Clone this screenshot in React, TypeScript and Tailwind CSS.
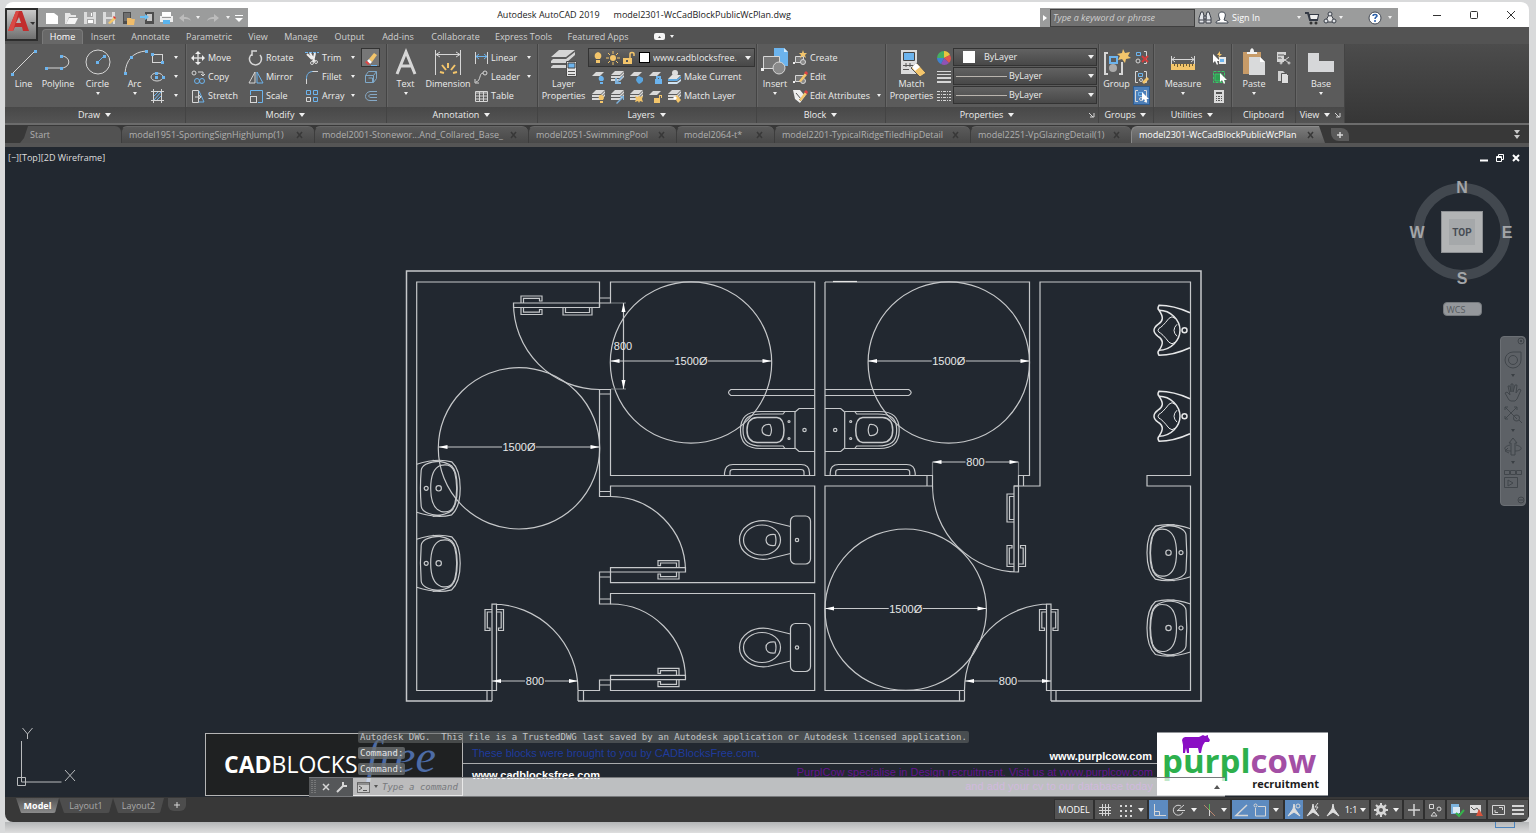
import { ReactNode } from "react";
import clsx from "clsx";

type IconProps = { w?: number; h?: number; children: ReactNode };

const Icon = ({ w = 16, h = 16, children }: IconProps) => (
  <svg
    width={w}
    height={h}
    viewBox={`0 0 ${w} ${h}`}
    fill="none"
    stroke="#d6d6d6"
    className="shrink-0"
    aria-hidden="true"
  >
    {children}
  </svg>
);

const BLUE = "#6cb4ee";
const GOLD = "#f3c56b";

const Caret = ({ big }: { big?: boolean }) => (
  <Icon w={big ? 8 : 6} h={4}>
    <path d={big ? "M1 0h6L4 4z" : "M1 0h4L3 3z"} fill="#f0f0f0" stroke="none" />
  </Icon>
);

/* ---------- quick access ---------- */

const quickIcons = [
  {
    name: "New",
    icon: <path d="M2 3h8l4 3v8H2z" fill="#fff" stroke="none" />,
  },
  {
    name: "Open",
    icon: (
      <g stroke="none">
        <path d="M2 3h5l1 2h5v2H6l-3 7H2z" fill="#e8e8e8" />
        <path d="M6 8h9l-3 6H3z" fill="#f6f6f6" />
      </g>
    ),
  },
  {
    name: "Save",
    icon: (
      <g stroke="none">
        <path d="M2 2h12v12H2z" fill="#dcdcdc" />
        <path d="M5 2h6v5H5zM5 9h7v5H5z" fill="#a5a5a5" />
        <path d="M9 3h1v3H9zM6 10h5v3H6z" fill="#fff" />
      </g>
    ),
  },
  {
    name: "Save As",
    icon: (
      <g stroke="none">
        <path d="M2 2h12v12H2z" fill="#dcdcdc" />
        <path d="M5 2h6v5H5zM5 9h7v5H5z" fill="#a5a5a5" />
        <path d="M7 13l6-6 2 2-6 5z" fill={GOLD} />
        <path d="M12 7l1-1 2 2-1 1z" fill="#d33" />
      </g>
    ),
  },
  {
    name: "Open from Web",
    icon: (
      <g stroke="none">
        <path d="M3 2h8v12H3z" fill="#4d4d4d" />
        <path d="M4 3h6v8H4z" fill="#6f6f6f" />
        <path d="M7 8h4l1 1h3l-1 6H7z" fill="#eebb6a" />
      </g>
    ),
  },
  {
    name: "Save to Web",
    icon: (
      <g stroke="none">
        <path d="M6 2h9v12H6z" fill="#4d4d4d" />
        <path d="M8 4h5v7H8z" fill="#c8c8c8" />
        <path d="M1 6h5V4l4 3-4 3V8H1z" fill="#6cc0f5" />
      </g>
    ),
  },
  {
    name: "Plot",
    icon: (
      <g stroke="none">
        <path d="M4 2h9v4H4z" fill="#fff" />
        <path d="M2 6h13v6H2z" fill="#efefef" />
        <path d="M4 7h9v1H4z" fill="#999" />
        <path d="M5 10h7v4H5z" fill="#5ab4ee" />
      </g>
    ),
  },
];

/* ---------- title bar ---------- */

const TitleBar = () => (
  <header className="flex h-[25px] bg-white items-end">
    <div className="flex h-[19px] w-[243px] items-center bg-[#9b9c9c] pl-[37px]">
      {quickIcons.map((q) => (
        <button key={q.name} aria-label={q.name} className="w-[19px] flex justify-center">
          <Icon>{q.icon}</Icon>
        </button>
      ))}
      <button aria-label="Undo" className="w-[20px] flex justify-center">
        <Icon w={14} h={10}>
          <path d="M1 5l5-4v3c4 0 6 1 7 4-2-2-4-2-7-2v3z" fill="#bcbcbc" stroke="none" />
        </Icon>
      </button>
      <Caret />
      <button aria-label="Redo" className="w-[24px] flex justify-center">
        <Icon w={14} h={10}>
          <path d="M13 5L8 1v3C4 4 2 5 1 8c2-2 4-2 7-2v3z" fill="#bcbcbc" stroke="none" />
        </Icon>
      </button>
      <Caret />
      <button aria-label="Customize" className="pl-1">
        <Icon w={8} h={8}>
          <path d="M0 1.5h8" stroke="#fff" />
          <path d="M0 4h8L4 8z" fill="#fff" stroke="none" />
        </Icon>
      </button>
    </div>
    <h1 className="flex flex-1 self-center justify-center gap-[14px] text-[#222] whitespace-nowrap">
      <span>Autodesk AutoCAD 2019</span>
      <span>model2301-WcCadBlockPublicWcPlan.dwg</span>
    </h1>
    <div className="flex h-[19px] w-[358px] items-center bg-[#9b9c9c] text-white">
      <button aria-label="Collapse search" className="w-[10px] flex justify-center">
        <Icon w={4} h={6}>
          <path d="M0 0l4 3-4 3z" fill="#fff" stroke="none" />
        </Icon>
      </button>
      <input
        aria-label="Search"
        placeholder="Type a keyword or phrase"
        className="h-[18px] w-[145px] border border-[#3f3f3f] bg-[#717171] px-[2px] italic placeholder:text-[#cfcfcf]"
      />
      <button aria-label="Find" className="w-[19px] flex justify-center">
        <Icon>
          <g stroke="#3a3f48" fill="#e4e6ea">
            <path d="M4 2h2l1 4v7H2V8zM10 2h2l2 6v5H9V6z" />
            <path d="M7 6h2v3H7zM2 10h5M9 10h5" />
          </g>
        </Icon>
      </button>
      <button className="flex w-[88px] items-center gap-[2px]">
        <Icon>
          <path
            d="M8 2c3 0 4 2 3 5l-1 3c3 1 4 1 4 3H2c0-2 1-2 4-3L5 7c-1-3 0-5 3-5z"
            fill="#fff"
            stroke="#3f4651"
          />
        </Icon>
        <span className="flex-1 text-left">Sign In</span>
        <Caret />
      </button>
      <button aria-label="App Store" className="w-[20px] flex justify-center">
        <Icon>
          <path d="M1 3h3l2 7h7l1-5H5" stroke="#333944" strokeWidth="2" />
          <path d="M6 5h8l-1 4H7z" fill="#eee" stroke="none" />
          <circle cx="7" cy="13" r="1.5" fill="#333" stroke="none" />
          <circle cx="12" cy="13" r="1.5" fill="#333" stroke="none" />
        </Icon>
      </button>
      <button aria-label="Stay Connected" className="w-[25px] flex items-center">
        <Icon>
          <path d="M8 3l5 9H3z" stroke="#3a3f48" fill="#e8e8e8" />
          <g fill="#dfe2e6" stroke="#3a3f48">
            <circle cx="8" cy="4" r="2" />
            <circle cx="4" cy="11" r="2" />
            <circle cx="12" cy="11" r="2" />
          </g>
        </Icon>
        <Caret />
      </button>
      <button aria-label="Help" className="ml-[20px] flex items-center gap-1">
        <Icon>
          <circle cx="8" cy="8" r="6" fill="#fff" stroke="#444a55" />
          <path d="M6 6c0-2 4-2 4 0 0 1-2 1-2 3M8 10v2" stroke="#2b5fa8" strokeWidth="1.5" />
        </Icon>
        <Caret />
      </button>
    </div>
    <div className="ml-[21px] flex w-[110px] self-center">
      <button aria-label="Minimize" className="flex-1 flex justify-center">
        <Icon w={10} h={10}>
          <path d="M1 5.5h8" stroke="#333" />
        </Icon>
      </button>
      <button aria-label="Maximize" className="flex-1 flex justify-center">
        <Icon w={10} h={10}>
          <rect x="1.5" y="1.5" width="7" height="7" rx="1" stroke="#333" />
        </Icon>
      </button>
      <button aria-label="Close" className="flex-1 flex justify-center">
        <Icon w={10} h={10}>
          <path d="M1 1l8 8M9 1L1 9" stroke="#333" />
        </Icon>
      </button>
    </div>
  </header>
);

const AppButton = () => (
  <button
    aria-label="Application menu"
    className="absolute left-0 top-[6px] flex h-[33px] w-[33px] border-2 border-[#2d2d2d] bg-linear-to-b from-[#c9c9c9] to-[#6f6f6f]"
  >
    <Icon w={29} h={29}>
      <g stroke="none">
        <path d="M9 1h6l7 20h-6l-1-4H8l-2 4H1z" fill="#c22e2e" />
        <path d="M12 7l2 6H9z" fill="#b5b5b5" />
        <path d="M9 1h3L6 21H1z" fill="#d94a45" />
        <path d="M23 12h5l-2 3z" fill="#333" />
      </g>
    </Icon>
  </button>
);

/* ---------- menu ---------- */

const menu = [
  { label: "Home", width: "w-[41px]" },
  { label: "Insert", width: "w-[40px]" },
  { label: "Annotate", width: "w-[55px]" },
  { label: "Parametric", width: "w-[62px]" },
  { label: "View", width: "w-[36px]" },
  { label: "Manage", width: "w-[50px]" },
  { label: "Output", width: "w-[47px]" },
  { label: "Add-ins", width: "w-[50px]" },
  { label: "Collaborate", width: "w-[65px]" },
  { label: "Express Tools", width: "w-[71px]" },
  { label: "Featured Apps", width: "w-[78px]" },
];

const MenuBar = () => (
  <nav className="flex h-[17px] items-end bg-[#535353] pl-[37px] text-[#d0d0d0]">
    {menu.map((m, i) => (
      <button
        key={m.label}
        className={clsx(
          m.width,
          "h-[15px] whitespace-nowrap",
          i === 0 && "rounded-t-sm border border-b-0 border-[#7a7a7a] bg-[#686868] text-white"
        )}
      >
        {m.label}
      </button>
    ))}
    <button aria-label="Ribbon display" className="ml-[17px] flex h-[15px] items-center gap-1">
      <Icon w={11} h={7}>
        <rect width="11" height="7" rx="2" fill="#f4f4f4" stroke="none" />
        <path d="M4 5l1.5-2L7 5z" fill="#555" stroke="none" />
      </Icon>
      <Caret />
    </button>
  </nav>
);

/* ---------- ribbon ---------- */

type PanelProps = { title: string; width: string; menu?: boolean; corner?: boolean; children: ReactNode };

const Panel = ({ title, width, menu = true, corner, children }: PanelProps) => (
  <section className={clsx(width, "shrink-0 border-r border-[#444] bg-[#5b5b5b]")}>
    <div className="flex h-[63px] pt-[4px] border-l border-[#666]">{children}</div>
    <div className="flex h-[16px] items-center bg-linear-to-b from-[#484848] to-[#545454]">
      <button className="flex flex-1 items-center justify-center gap-[4px]">
        {title}
        {menu && <Caret big />}
      </button>
      {corner && (
        <Icon w={9} h={6}>
          <path d="M0 1l4 4M5 1v4H1" />
        </Icon>
      )}
    </div>
  </section>
);

type BigProps = { label: string; width: string; icon: ReactNode; caret?: boolean; second?: string };

const Big = ({ label, width, icon, caret, second }: BigProps) => (
  <button className={clsx(width, "flex shrink-0 flex-col items-center")}>
    <Icon w={32} h={30}>
      {icon}
    </Icon>
    <span className="leading-[12px] whitespace-nowrap">{label}</span>
    {second && <span className="leading-[12px] whitespace-nowrap">{second}</span>}
    {caret && (
      <span className="pt-[2px]">
        <Caret />
      </span>
    )}
  </button>
);

type SmallProps = { label: string; icon: ReactNode; caret?: boolean; hideLabel?: boolean; active?: boolean };

const Small = ({ label, icon, caret, hideLabel, active }: SmallProps) => (
  <button
    aria-label={label}
    className={clsx(
      "flex h-[19px] items-center gap-[2px]",
      active && "bg-[#4d7fb8] outline outline-[#2f5a8c] -outline-offset-1"
    )}
  >
    <Icon>{icon}</Icon>
    {!hideLabel && <span className="whitespace-nowrap">{label}</span>}
    {caret && (
      <span className="ml-auto">
        <Caret />
      </span>
    )}
  </button>
);

const Col = ({ width, children }: { width: string; children: ReactNode }) => (
  <div className={clsx(width, "flex shrink-0 flex-col")}>{children}</div>
);

const dot = (x: number, y: number) => (
  <rect x={x - 1} y={y - 1} width="3" height="3" fill={BLUE} stroke="none" />
);

const sheets = (
  <g fill="#d9d9d9" stroke="none">
    <path d="M6 2h9l-4 4H2z" />
    <path d="M2 7h9l4-4v2l-4 4H2zM2 10h9l4-4v2l-4 4H2z" />
  </g>
);

const pencil = (
  <g stroke="none">
    <path d="M7 12l6-8 2 2-6 7z" fill={GOLD} />
    <path d="M12 4l2-2 2 2-1 2z" fill="#e04343" />
  </g>
);

const DrawPanel = () => (
  <Panel title="Draw" width="w-[181px]">
    <Big
      label="Line"
      width="w-[35px]"
      icon={
        <>
          <path d="M4 26L27 3" />
          {dot(4, 26)}
          {dot(27, 3)}
        </>
      }
    />
    <Big
      label="Polyline"
      width="w-[34px]"
      icon={
        <>
          <path d="M4 20h16c9-1 9-11 0-12" />
          {dot(4, 20)}
          {dot(19, 20)}
          {dot(19, 8)}
        </>
      }
    />
    <Big
      label="Circle"
      width="w-[45px]"
      caret
      icon={
        <>
          <circle cx="16" cy="14" r="12" />
          <path d="M16 14l6-6" stroke={BLUE} />
          {dot(15, 14)}
          {dot(22, 8)}
        </>
      }
    />
    <Big
      label="Arc"
      width="w-[29px]"
      caret
      icon={
        <>
          <path d="M6 25C7 12 14 4 27 3" />
          {dot(6, 25)}
          {dot(12, 9)}
          {dot(27, 3)}
        </>
      }
    />
    <Col width="w-[30px]">
      <Small
        label="Rectangle"
        hideLabel
        caret
        icon={
          <>
            <rect x="3.5" y="4.5" width="10" height="8" />
            {dot(3, 4)}
            {dot(13, 12)}
          </>
        }
      />
      <Small
        label="Ellipse"
        hideLabel
        caret
        icon={
          <>
            <ellipse cx="8" cy="8" rx="6" ry="4" />
            {dot(7, 8)}
            {dot(14, 8)}
            {dot(7, 4)}
          </>
        }
      />
      <Small
        label="Hatch"
        hideLabel
        caret
        icon={
          <>
            <path d="M4.5 1v14M12.5 1v14M2 3.5h13M2 12.5h13" />
            <path d="M5 8l4-4M5 12l7-8M8 12l4-4" stroke={BLUE} />
          </>
        }
      />
    </Col>
  </Panel>
);

const ModifyPanel = () => (
  <Panel title="Modify" width="w-[201px]">
    <Col width="w-[61px] pl-[3px]">
      <Small
        label="Move"
        icon={
          <>
            <path d="M8 3v10M3 8h10" strokeWidth="1.5" />
            <path d="M8 1l3 3H5zM8 15l3-3H5zM1 8l3-3v6zM15 8l-3-3v6z" fill="#eee" stroke="none" />
          </>
        }
      />
      <Small
        label="Copy"
        icon={
          <>
            <circle cx="4" cy="4" r="2" />
            <path d="M8 3h5v3M11 5l2 2 2-2" />
            <circle cx="7" cy="12" r="2.5" stroke={BLUE} />
            <circle cx="12" cy="12" r="2.5" stroke={BLUE} />
          </>
        }
      />
      <Small
        label="Stretch"
        icon={
          <>
            <path d="M2.5 2.5h6v12h-6zM5 9h6M9 7l2 2-2 2" />
            <path d="M9 3l5 11H9" stroke={BLUE} />
          </>
        }
      />
    </Col>
    <Col width="w-[56px]">
      <Small label="Rotate" icon={<path d="M4 4a6 6 0 1 0 8 1M9 1H4v5" strokeWidth="1.5" />} />
      <Small
        label="Mirror"
        icon={
          <>
            <path d="M7 3v11H1z" />
            <path d="M9 3v11h6z" stroke={BLUE} />
          </>
        }
      />
      <Small
        label="Scale"
        icon={
          <>
            <path d="M2.5 7V2.5h12v12H10" stroke={BLUE} />
            <rect x="2.5" y="8.5" width="6" height="6" />
          </>
        }
      />
    </Col>
    <Col width="w-[52px]">
      <Small
        label="Trim"
        caret
        icon={
          <>
            <path d="M1 2.5h14" stroke={BLUE} strokeDasharray="3 1" />
            <path d="M6 3l5 9M11 3l-2 9M3 4l5 5" strokeWidth="2" stroke="#eee" />
            <circle cx="8" cy="13" r="1.5" />
            <circle cx="12" cy="12" r="1.5" />
          </>
        }
      />
      <Small
        label="Fillet"
        caret
        icon={
          <>
            <path d="M8 2.5h6M2.5 10v5" />
            <path d="M2.5 10c0-5 2-7 6-7.5" stroke={BLUE} />
          </>
        }
      />
      <Small
        label="Array"
        caret
        icon={
          <>
            <path d="M2.5 9.5h4v4h-4z" />
            <path d="M2.5 2.5h4v4h-4zM9.500 2.500h4v4h-4zM9.500 9.500h4v4h-4z" stroke={BLUE} />
          </>
        }
      />
    </Col>
    <div className="ml-[5px] flex w-[19px] flex-col items-center">
      <div className="h-[19px] w-[19px] border border-[#333] bg-[#777]">
        <Small
          label="Erase"
          hideLabel
          icon={
            <g stroke="none">
              <path d="M7 8l5-6 3 2-5 7z" fill={GOLD} />
              <path d="M5 10l2-2 3 3-2 2z" fill="#fff" />
              <path d="M3 11l2-1 3 3-2 1z" fill="#e04343" />
              <path d="M9 14h6v1H9z" fill={BLUE} />
            </g>
          }
        />
      </div>
      <Small
        label="Explode"
        hideLabel
        icon={
          <path d="M2.5 6.5h8v7h-8zM2.5 6.5l3-4h8l-3 4M13.5 2.5v7l-3 4M5.5 9h4v5" stroke="#7fa9c9" />
        }
      />
      <Small
        label="Offset"
        hideLabel
        icon={<path d="M14 3.5H7c-6 1-6 9 0 9h7M14 6.5H8c-3 0-3 3 0 3h6" stroke="#86a9c6" />}
      />
    </div>
  </Panel>
);

const AnnotationPanel = () => (
  <Panel title="Annotation" width="w-[151px]">
    <Big
      label="Text"
      width="w-[35px]"
      caret
      icon={<path d="M7 26L16 4l9 22M11 18h10" strokeWidth="3" />}
    />
    <Big
      label="Dimension"
      width="w-[50px]"
      icon={
        <>
          <path d="M3.5 2v25M28.5 2v25M4 6.5h24M8 4L4 6.5 8 9M24 4l4 2.5-4 2.5" />
          <path d="M8 24l4 1M10 17l4 5M16 15v5M23 17l-4 5M25 24l-4 1" stroke={GOLD} strokeWidth="2" />
        </>
      }
    />
    <Col width="w-[59px]">
      <Small
        label="Linear"
        caret
        icon={
          <>
            <path d="M2.5 2v12M14.5 2v12" />
            <path d="M3 6.5h11M6 4L3 6.5 6 9M11 4l3 2.5L11 9" stroke={BLUE} />
          </>
        }
      />
      <Small
        label="Leader"
        caret
        icon={
          <>
            <circle cx="12" cy="4" r="2" />
            <path d="M10 4C6 4 8 12 3 13M2 10v4h4" />
          </>
        }
      />
      <Small label="Table" icon={<path d="M2.5 3.5h12v10h-12zM2 5h12M2 8h12M2 11h12M6.5 4v9M10.5 4v9" />} />
    </Col>
  </Panel>
);

const layerTools = [
  { name: "Layer Off", tint: BLUE, shape: "M10 7a3 3 0 0 1 3 5h-3a3 3 0 0 1 0-5zM10 13h3v2h-3z" },
  { name: "Isolate", tint: "#7fb3dd", shape: "M14 8l-5 5h3v2H6V9h2v3l5-5z" },
  { name: "Freeze", tint: "#5aa5df", shape: "M11 7l2 1 2 1v3l-2 2-2 1-2-2-1-2 1-3z" },
  { name: "Lock", tint: BLUE, shape: "M8 10h7v5H8zM9 7h5v3h-2V9h-1v1H9z" },
];

const layerTools2 = [
  { name: "Turn All On", tint: GOLD, shape: "M10 7a3 3 0 0 1 3 5h-3a3 3 0 0 1 0-5zM10 13h3v2h-3z" },
  { name: "Unisolate", tint: "#7fb3dd", shape: "M7 15l6-6h-2V8h4v4h-1v-2l-6 6z" },
  { name: "Thaw All", tint: GOLD, shape: "M11 7l1 2 3-1-1 3 1 3-3-1-1 2-1-2-3 1 1-3-1-3 3 1z" },
  { name: "Unlock", tint: GOLD, shape: "M7 10h6v5H7zM12 7h3v3h-1V8h-1v2h-1z" },
];

const single = <path d="M6 3h8l-4 4H2z" fill="#d9d9d9" stroke="none" />;

const LayersPanel = () => (
  <Panel title="Layers" width="w-[219px]">
    <Big
      label="Layer"
      second="Properties"
      width="w-[49px]"
      icon={
        <>
          <path d="M11 2h16L18 9H3zM3 13l2-2h13l9-7v3l-9 8H3zM3 19l2-2h13v3H3z" fill="#d5d5d5" stroke="none" />
          <path d="M18.5 13.5h10v15h-10z" fill="#e3e3e3" stroke="#4a4a4a" />
          <path d="M20 15h7v5h-7z" fill={BLUE} stroke="#444" />
          <path d="M20 23.5h7M20 26.5h7" stroke="#555" />
        </>
      }
    />
    <div className="flex flex-col">
      <div className="flex h-[19px] w-[167px] items-center border border-[#333] bg-linear-to-b from-[#626262] to-[#484848] px-[2px]">
        <Icon w={14}>
          <path d="M7 2a4 4 0 0 1 2 7H5a4 4 0 0 1 2-7zM5 10h4v3H5z" fill={GOLD} stroke="none" />
        </Icon>
        <Icon>
          <circle cx="8" cy="8" r="3" fill={GOLD} stroke="none" />
          <path d="M8 1v3M8 12v3M1 8h3M12 8h3M3 3l2 2M11 11l2 2M13 3l-2 2M3 13l2-2" stroke={GOLD} />
        </Icon>
        <Icon>
          <path d="M2 8h9v6H2z" fill={GOLD} stroke="none" />
          <path d="M9 8V4c0-2 4-2 4 0v2" stroke={GOLD} strokeWidth="1.5" />
          <path d="M5 10h2v2H5z" fill="#555" stroke="none" />
        </Icon>
        <span className="mx-[2px] h-[11px] w-[11px] border border-black bg-white" />
        <select aria-label="Layer" className="min-w-0 flex-1 appearance-none bg-transparent pl-px">
          <option>www.cadblocksfree.</option>
        </select>
        <Caret big />
      </div>
      <div className="flex gap-[3px] pl-[2px]">
        {layerTools.map((t) => (
          <Small
            key={t.name}
            label={t.name}
            hideLabel
            icon={
              <>
                {t.name === "Isolate" ? sheets : single}
                <path d={t.shape} fill={t.tint} stroke="none" />
              </>
            }
          />
        ))}
        <Small
          label="Make Current"
          icon={
            <g stroke="none">
              <path d="M6 6h9l-4 4H2z" fill="#e2e2e2" />
              <path d="M2 10h9l4-3v2l-4 3H2z" fill="#5fa8df" />
              <path d="M2 13h9l4-3v2l-4 3H2z" fill="#cfe2f2" />
              <circle cx="9" cy="4" r="3" fill="#ddd" />
            </g>
          }
        />
      </div>
      <div className="flex gap-[3px] pl-[2px]">
        {layerTools2.map((t) => (
          <Small
            key={t.name}
            label={t.name}
            hideLabel
            icon={
              <>
                {t.name === "Unlock" ? single : sheets}
                <path d={t.shape} fill={t.tint} stroke="none" />
              </>
            }
          />
        ))}
        <Small
          label="Match Layer"
          icon={
            <>
              {sheets}
              <path d="M8 9l3-2 4 5-3 3z" fill={GOLD} stroke="none" />
              <path d="M7 10l2-2 2 2-2 2z" fill="#fff" stroke="none" />
            </>
          }
        />
      </div>
    </div>
  </Panel>
);

const block = (
  <>
    <path d="M3.5 6.5h8v6h-8z" fill="#777" />
    <circle cx="11" cy="12" r="2.5" fill="#888" />
    <path d="M1 12h2v2H1z" fill="#eee" stroke="none" />
  </>
);

const BlockPanel = () => (
  <Panel title="Block" width="w-[129px]">
    <Big
      label="Insert"
      width="w-[34px]"
      caret
      icon={
        <>
          <path d="M15 0h10l4 4v14H15z" fill={BLUE} stroke="none" />
          <path d="M25 0v4h4z" fill="#d3ebfc" stroke="none" />
          <path d="M4.5 8.5h16v12h-16z" fill="#777" />
          <circle cx="20" cy="20" r="6" fill="#8a8a8a" />
          <path d="M2 20h3v3H2z" fill="#eee" stroke="none" />
        </>
      }
    />
    <Col width="w-[90px]">
      <Small
        label="Create"
        icon={
          <>
            {block}
            <path d="M11 0l1 3h3l-2 2 1 3-3-2-3 2 1-3-2-2h3z" fill={GOLD} stroke="none" />
          </>
        }
      />
      <Small
        label="Edit"
        icon={
          <>
            {block}
            {pencil}
          </>
        }
      />
      <Small
        label="Edit Attributes"
        caret
        icon={
          <>
            <path d="M1 2h7l5 6-5 7-5-4z" fill="#eee" stroke="none" />
            <path d="M4 5l5 6M7 11l2 2" stroke="#555" />
            {pencil}
          </>
        }
      />
    </Col>
  </Panel>
);

const PropSelect = ({ label, line }: { label: string; line?: boolean }) => (
  <div className="flex h-[18px] w-[144px] items-center border border-[#333] bg-linear-to-b from-[#626262] to-[#484848] pr-[1px] mb-[1px]">
    {line ? (
      <span className="mx-[2px] h-px w-[51px] bg-[#b9b4ae]" />
    ) : (
      <span className="mx-[9px] h-[12px] w-[12px] bg-white" />
    )}
    <select aria-label={label} className="min-w-0 flex-1 appearance-none bg-transparent">
      <option>ByLayer</option>
    </select>
    <Caret big />
  </div>
);

const PropertiesPanel = () => (
  <Panel title="Properties" width="w-[213px]" corner>
    <Big
      label="Match"
      second="Properties"
      width="w-[49px]"
      icon={
        <>
          <path d="M5 2h16v24H5z" fill="#dcdcdc" stroke="none" />
          <path d="M7.5 4.5h11v8h-11z" fill={BLUE} stroke="#444" />
          <path d="M7 17.5h11M7 21.5h6M10 15v4M14 15v4" stroke="#555" />
          <path d="M15 20l6-5 9 10-6 4z" fill={GOLD} stroke="#555" />
          <path d="M16 19l4-4 4 4-5 4z" fill="#fff" stroke="none" />
        </>
      }
    />
    <Col width="w-[17px]">
      <Small
        label="Color"
        hideLabel
        icon={
          <g stroke="none">
            <path d="M8 8V1a7 7 0 0 1 6 4z" fill="#e7c63f" />
            <path d="M8 8l6-3a7 7 0 0 1-1 8z" fill="#e0564e" />
            <path d="M8 8l5 5a7 7 0 0 1-8 1z" fill="#8f53b5" />
            <path d="M8 8l-3 6a7 7 0 0 1-4-6z" fill="#3f83cf" />
            <path d="M8 8H1a7 7 0 0 1 7-7z" fill="#45ae63" />
          </g>
        }
      />
      <Small
        label="Lineweight"
        hideLabel
        icon={
          <>
            <path d="M1 2.5h14M1 5.5h14" />
            <path d="M1 9h14M1 13h14" strokeWidth="2" />
          </>
        }
      />
      <Small
        label="Linetype"
        hideLabel
        icon={<path d="M1 3.5h14M1 6.5h14M1 9.5h14M1 12.5h14" strokeDasharray="3 1 1 1" />}
      />
    </Col>
    <div>
      <PropSelect label="Object color" />
      <PropSelect label="Lineweight" line />
      <PropSelect label="Linetype" line />
    </div>
  </Panel>
);

const bracketed = (
  <>
    <path d="M5 2.5H2.5v11H5M11 2.5h2.5v11H11" />
    <path d="M5.5 4.5h4v3h-4z" stroke={BLUE} />
    <circle cx="8" cy="11" r="1.5" />
  </>
);

const GroupsPanel = () => (
  <Panel title="Groups" width="w-[55px]">
    <Big
      label="Group"
      width="w-[33px]"
      icon={
        <>
          <path d="M7 5H4v21h3M18 26h3V14" strokeWidth="2" />
          <path d="M9 9h7v6H9z" stroke={BLUE} strokeWidth="2" />
          <circle cx="12" cy="20" r="4" fill="#aaa" stroke="none" />
          <path d="M22 1l2 4 5-1-2 4 3 2-5 1-1 4-3-4-4 1 2-4-3-2 5-1z" fill={GOLD} stroke="none" />
        </>
      }
    />
    <Col width="w-[17px]">
      <Small
        label="Ungroup"
        hideLabel
        icon={
          <>
            <path d="M11 1.5h2.5v12H11" />
            <path d="M3.5 2.5h4v3h-4z" stroke={BLUE} />
            <circle cx="5" cy="11" r="2" />
            <path d="M9 6l6 6M15 6l-6 6" stroke="#d23b3b" strokeWidth="2" />
          </>
        }
      />
      <Small
        label="Group Edit"
        hideLabel
        icon={
          <>
            {bracketed}
            <path d="M9 13l5-5 2 2-5 5z" fill={GOLD} stroke="none" />
          </>
        }
      />
      <Small
        label="Group Selection"
        hideLabel
        active
        icon={
          <>
            {bracketed}
            <path d="M9 4v9l2-2 2 4 1-1-1-3h3z" fill="#fff" stroke="none" />
          </>
        }
      />
    </Col>
  </Panel>
);

const UtilitiesPanel = () => (
  <Panel title="Utilities" width="w-[78px]">
    <Big
      label="Measure"
      width="w-[56px]"
      caret
      icon={
        <>
          <path d="M4.5 8v8M27.5 8v8M5 11.5h22M8 9l-3 2.5L8 14M24 9l3 2.5-3 2.5" />
          <path d="M4 16h24v6H4z" fill={GOLD} stroke="none" />
          <path d="M7.5 16v2M10.5 16v3M13.5 16v2M16.5 16v3M19.5 16v2M22.5 16v3M25.5 16v2" stroke="#6b5930" />
        </>
      }
    />
    <Col width="w-[17px]">
      <Small
        label="Quick Select"
        hideLabel
        icon={
          <g stroke="none">
            <path d="M2 4v9l2-2 2 4 1-1-1-3h3z" fill="#fff" />
            <path d="M8 7h7v7H8z" fill="#e8e8e8" />
            <path d="M9 9h4v3H9z" fill={BLUE} />
            <path d="M9 1L6 5h2l-1 3 4-4H9z" fill={GOLD} />
          </g>
        }
      />
      <Small
        label="Select All"
        hideLabel
        icon={
          <>
            <path d="M2.5 2.5h11v11h-11z" stroke="#37c766" strokeDasharray="3 1" />
            <path d="M4 5h7v7H4z" fill="#2f9e52" stroke="#37c766" />
            <path d="M9 4v9l2-2 2 4 1-1-1-3h3z" fill="#fff" stroke="none" />
          </>
        }
      />
      <Small
        label="Calculator"
        hideLabel
        icon={
          <g stroke="none">
            <path d="M3 2h10v13H3z" fill="#dadada" />
            <path d="M5 4h6v2H5zM5 8h1v1H5zM7 8h2v1H7zM10 8h1v1h-1zM5 10h1v1H5zM7 10h2v1H7zM10 10h1v1h-1zM5 12h1v1H5zM7 12h2v1H7zM10 12h1v1h-1z" fill="#555" />
          </g>
        }
      />
    </Col>
  </Panel>
);

const ClipboardPanel = () => (
  <Panel title="Clipboard" width="w-[64px]" menu={false}>
    <Big
      label="Paste"
      width="w-[42px]"
      caret
      icon={
        <g stroke="none">
          <path d="M5 4h18v22H5z" fill="#c79b68" />
          <path d="M9 6h10V4h-3c0-5-4-5-4 0H9z" fill="#f2f2f2" />
          <path d="M11 9h11l5 5v13H11z" fill="#d9dadb" />
          <path d="M22 9v5h5z" fill="#fff" />
        </g>
      }
    />
    <Col width="w-[17px]">
      <Small
        label="Cut"
        hideLabel
        icon={
          <>
            <path d="M2 2h9v3H9v7H2z" fill="#d4d4d4" stroke="none" />
            <path d="M3 5h6M3 8h4" stroke="#555" />
            <path d="M6 7l8 6M14 7l-8 6" />
            <circle cx="14" cy="13" r="1" />
            <circle cx="6" cy="13" r="1" />
          </>
        }
      />
      <Small
        label="Copy"
        hideLabel
        icon={
          <>
            <path d="M3 2h5l2 2v8H3z" fill="#cfcfcf" stroke="none" />
            <path d="M6.5 4.5h5l2 2v8h-7z" fill="#dedede" stroke="#555" />
          </>
        }
      />
    </Col>
  </Panel>
);

const Ribbon = () => (
  <div className="flex h-[79px] bg-[#3a3a3a] text-[#ececec]">
    <DrawPanel />
    <ModifyPanel />
    <AnnotationPanel />
    <LayersPanel />
    <BlockPanel />
    <PropertiesPanel />
    <GroupsPanel />
    <UtilitiesPanel />
    <ClipboardPanel />
    <Panel title="View" width="w-[49px]" corner>
      <Big
        label="Base"
        width="w-[48px]"
        caret
        icon={<path d="M3 5h11v8h15v11H3z" fill="#d6d7d9" stroke="none" />}
      />
    </Panel>
    <div className="flex-1 bg-linear-to-b from-[#4c4c4c] to-[#363636]" />
  </div>
);

/* ---------- drawing tabs ---------- */

const docs = [
  { name: "model1951-SportingSignHighJump(1)", width: "w-[193px]" },
  { name: "model2001-Stonewor...And_Collared_Base_", width: "w-[214px]" },
  { name: "model2051-SwimmingPool", width: "w-[148px]" },
  { name: "model2064-t*", width: "w-[98px]" },
  { name: "model2201-TypicalRidgeTiledHipDetail", width: "w-[196px]" },
  { name: "model2251-VpGlazingDetail(1)", width: "w-[161px]" },
  { name: "model2301-WcCadBlockPublicWcPlan", width: "w-[194px]", active: true },
];

const DocTabs = () => (
  <div className="flex h-[24px] items-end border-t-2 border-b-[4px] border-t-[#6c6c6c] border-b-[#555] bg-[#383838] pl-[15px] text-[#b0b0b0]">
    <button className="h-[17px] w-[101px] bg-[#525252] pl-[10px] text-left rounded-tr-md [clip-path:polygon(0_100%,4px_70%,8px_0,100%_0,100%_100%)]">
      Start
    </button>
    {docs.map((d) => (
      <div
        key={d.name}
        className={clsx(
          d.width,
          "flex h-[17px] items-center justify-between rounded-t-md border-t border-l pl-[7px] pr-[10px]",
          d.active
            ? "border-[#8a8a8a] bg-linear-to-b from-[#7b7b7b] to-[#5c5c5c] text-white [clip-path:polygon(0_0,calc(100%-6px)_0,100%_100%,0_100%)]"
            : "border-[#666] border-l-[#3d3d3d] bg-linear-to-b from-[#5b5b5b] to-[#484848]"
        )}
      >
        <button className="whitespace-nowrap">{d.name}</button>
        <button aria-label={`Close ${d.name}`}>
          <Icon w={8} h={8}>
            <path d="M1 1l5 6M6 1L1 7" stroke="#383838" strokeWidth="1.5" />
          </Icon>
        </button>
      </div>
    ))}
    <button
      aria-label="New drawing"
      className="ml-[6px] mb-[2px] flex h-[13px] w-[18px] items-center justify-center rounded-tr-lg rounded-bl-lg bg-[#5a5a5a]"
    >
      <Icon w={8} h={8}>
        <path d="M4 1v6M1 4h6" strokeWidth="1.5" />
      </Icon>
    </button>
    <button aria-label="Overflow" className="ml-auto mr-[8px] mb-[4px]">
      <Icon w={8} h={9}>
        <path d="M1 0h6L4 4zM1 5h6L4 9z" fill="#c9c9c9" stroke="none" />
      </Icon>
    </button>
  </div>
);

/* ---------- model space ---------- */

// door pull, u runs along the leaf and v towards it
const Pull = ({ t }: { t: string }) => (
  <path transform={t} d="M0 7V0H21V5H18.5V2.3H2.5V7" />
);

const PullPair = ({ a, b }: { a: string; b: string }) => (
  <>
    <Pull t={a} />
    <Pull t={b} />
  </>
);

const Sink = ({ t }: { t: string }) => (
  <g transform={t}>
    <path d="M0 -24C9 -27 22 -30 35 -26.5C40 -22 43.5 -12 43.5 0S40 22 35 26.5C22 30 9 27 0 24" />
    <path d="M16 -28C34 -26 40.5 -24 40.5 0S34 26 16 28" />
    <path d="M24 -27C10 -27 5 -22 4.500 -18Q3 0 4.500 18C5 22 10 27 24 27" />
    <path d="M24 -23C16 -20 14 -11 14 0S16 20 24 23C33 25 36 21 38 16Q42 0 38 -16C36 -21 33 -25 24 -23Z" />
    <circle cx="9.5" r="2" />
    <circle cx="22" r="2.7" />
  </g>
);

const Urinal = ({ y }: { y: number }) => (
  <g transform={`translate(1154 ${y})`} stroke="#e6e7e8" strokeWidth="1.5">
    <path d="M36 -17.5C24 -23 14 -25 5 -25Q3 -22 5 -20C10 -13 9 -9 4 -6Q-4 0 4 6C9 9 10 13 5 20Q3 22 5 25C14 25 24 23 36 17.5" />
    <path d="M5 -20C17 -20 26 -10 26 0S17 20 5 20" />
    <path d="M21 -12Q18 -15 15 -12Q8 -3 5 -2Q3 0 5 2Q8 3 15 12Q18 15 21 12M23 -6Q17 0 23 6" strokeWidth="1" />
    <circle cx="30.5" r="2.5" />
  </g>
);

const Toilet = ({ y }: { y: number }) => (
  <g transform={`translate(0 ${y})`}>
    <rect x="790.5" y="-24" width="20" height="48" rx="5" />
    <path d="M790.5 -13.5L768 -19C752 -21 739.5 -12 739.5 0S752 21 768 19L790.5 13.5" />
    <ellipse cx="762" rx="18.5" ry="15" />
    <path d="M775 -5.5C769 -6 766 -4 766 0S769 6 775 5.5Q777 0 775 -5.5Z" />
    <circle cx="797" r="1.7" />
  </g>
);

const WidePan = ({ t }: { t?: string }) => (
  <g transform={t}>
    <path d="M814.7 408.5H799L795 412V448L799 451.5H814.7" />
    <path d="M795 411.5H762C746 411 740.5 418 740.5 430S746 449 762 448.5H795" />
    <path d="M785 411.5L783 414H762C749 414 743 418 743 430S749 446 762 446H783L785 448.5" />
    <path
      d="M757 417.5H777C782 418 784 423 784 430S782 442 777 442.5H757C750 442 747 437 747 430S750 418 757 417.5Z"
      strokeWidth="1.5"
    />
    <path d="M770 424.5C764 424 762 427 762 430S764 436 770 435.5Q773 430 770 424.5Z" />
    <circle cx="789" cy="421.5" r="1" />
    <circle cx="789" cy="438.5" r="1" />
    <circle cx="804.5" cy="430" r="1.7" />
    <path d="M814.7 389.5H731Q726 392.5 731 395.5H814.7" />
    <path d="M724.5 475.5V473Q725 464.5 733 464.5H801Q809.5 464.5 809.5 473V475.5M730 475.5V472Q730 469.5 733 469.5H801Q804 469.5 804 472V475.5" />
  </g>
);

const Dim = ({ x1, x2, y, label, gap }: { x1: number; x2: number; y: number; label: string; gap: number }) => {
  const mid = (x1 + x2) / 2;
  return (
    <g>
      <path d={`M${x1} ${y}H${mid - gap}M${mid + gap} ${y}H${x2}`} />
      <path d={`M${x1} ${y}l9 -2v4zM${x2} ${y}l-9 -2v4z`} fill="#fff" stroke="none" />
      <text x={mid} y={y + 4} textAnchor="middle" fill="#e8e8e8" stroke="none" fontSize="11">
        {label}
      </text>
    </g>
  );
};

const FloorPlan = () => (
  <g stroke="#c6c8ca" strokeWidth="1.2" fill="none">
    {/* outer and inner walls */}
    <path d="M492 701H406.5V271H1201V701H1051" strokeWidth="1.5" />
    <path d="M578 701H964.5" strokeWidth="1.5" />
    <path d="M492 690.5V701M487 690.5V701M578 690.5V701M583.5 690.5V701M959.5 690.5V701M964.5 690.5V701M1051 690.5V701M1056 690.5V701" />
    <path d="M599.5 307V282H416.7V690.5H496.5M578 690.5H599.5V680H610.5V690.5H814.7V593.5H610.5V604H599.5V572H610.5V582.7H814.7V486H610.5V496.5H599.5V389.5H610.5V475.5H814.7V282H610.5V303H599.5" />
    <path d="M599.5 298H610.5M599.5 394H610.5M599.5 491.5H610.5M599.5 577H610.5M599.5 599H610.5M599.5 685H610.5" />
    <path d="M825 282H1029.5V475.5H1018.5V486M1023.5 475.5V486M825 282V475.5H932.5V486H825V690.5H964.5M927 475.5V486" />
    <path d="M1014 486H1040V282H1190.5V475.5H1147V486H1190.5V690.5H1046.5" />
    <path d="M833 281.5H857" stroke="#e4e4e4" />

    {/* turning circles */}
    <circle cx="691" cy="362.5" r="80.7" />
    <circle cx="519" cy="448.3" r="80.7" />
    <circle cx="948.8" cy="362.5" r="80.7" />
    <circle cx="905.7" cy="609.7" r="80.7" />

    {/* doors */}
    <path d="M513.5 303H599.5V307.5H513.5ZM513.5 303A86 86 0 0 0 599.5 389.5" />
    <path d="M563 307.5V315H592V307.5M565.5 307.5V312.5H589.5V307.5" />
    <PullPair a="translate(521 296)" b="matrix(1 0 0 -1 521 314.5)" />

    <path d="M610.5 567.7H685.5V572H610.5ZM610.5 496.5A75 75 0 0 1 685.5 571" />
    <PullPair a="matrix(-1 0 0 1 679 560.7)" b="matrix(-1 0 0 -1 679 579)" />
    <path d="M610.5 675.3H685.5V679.6H610.5ZM610.5 604A75 75 0 0 1 685.5 679" />
    <PullPair a="matrix(-1 0 0 1 679 668.3)" b="matrix(-1 0 0 -1 679 686.6)" />

    <path d="M492 604H496.5V690.5H492ZM492 604A86 86 0 0 1 578 690.5" />
    <PullPair a="matrix(0 1 1 0 485 609.5)" b="matrix(0 1 -1 0 503.5 609.5)" />

    <path d="M1046.5 604H1051V690.5H1046.5ZM1051 604A86 86 0 0 0 964.5 690.5" />
    <PullPair a="matrix(0 1 1 0 1039.5 609.5)" b="matrix(0 1 -1 0 1058 609.5)" />

    <path d="M1014 486H1018.5V572H1014ZM932.5 486A86 86 0 0 0 1018.5 572" />
    <path d="M1014 494H1007V522H1014M1014 496.5H1009.5V519.5H1014" />
    <PullPair a="matrix(0 -1 1 0 1007 566.5)" b="matrix(0 -1 -1 0 1025.5 566.5)" />

    {/* sanitary ware */}
    <Sink t="translate(416.7 488.3)" />
    <Sink t="translate(416.7 563.3)" />
    <Sink t="matrix(-1 0 0 1 1190.5 552.7)" />
    <Sink t="matrix(-1 0 0 1 1190.5 628)" />
    <Urinal y={330.3} />
    <Urinal y={416.2} />
    <Toilet y={540} />
    <Toilet y={647.5} />
    <WidePan />
    <WidePan t="matrix(-1 0 0 1 1639.7 0)" />

    {/* dimensions */}
    <Dim x1={610.5} x2={771.5} y={361} label="1500Ø" gap={17} />
    <Dim x1={438.5} x2={599.5} y={447} label="1500Ø" gap={17} />
    <Dim x1={868} x2={1029.5} y={361} label="1500Ø" gap={17} />
    <Dim x1={825} x2={986.5} y={608.5} label="1500Ø" gap={17} />
    <Dim x1={492} x2={578} y={681} label="800" gap={10} />
    <Dim x1={965} x2={1051} y={681} label="800" gap={10} />
    <Dim x1={932.5} x2={1018.5} y={462} label="800" gap={10} />
    <path d="M932.5 462V475M1018.5 462V475M611 303H626M611 389H626" stroke="#7d8186" />
    <path d="M623.5 303V389" />
    <path d="M623.5 303l-2 9h4zM623.5 389l-2 -9h4z" fill="#fff" stroke="none" />
    <text x="623" y="350" textAnchor="middle" fill="#e8e8e8" stroke="none" fontSize="11">
      800
    </text>
  </g>
);

const TitleBlock = () => (
  <g stroke="none" fontSize="11">
    <rect x="205.5" y="733.5" width="257" height="62" fill="#1f2122" stroke="#b5b5b5" />
    <text x="224" y="773" fill="#fff" fontSize="23" className="font-['Open_Sans',sans-serif]">
      <tspan fontWeight="700">CAD</tspan>BLOCKS
    </text>
    <text x="366" y="772" fill="#4d6ca6" fontSize="46" fontStyle="italic" className="font-['Liberation_Serif',serif]">
      free
    </text>
    <path d="M463 763.5H1157" stroke="#a9abad" />
    <text x="472" y="757" fill="#1f3b9c">
      These blocks were brought to you by CADBlocksFree.com.
    </text>
    <text x="472" y="779" fill="#fff" fontWeight="700">
      www.cadblocksfree.com
    </text>
    <text x="1152" y="760" fill="#fff" fontWeight="700" textAnchor="end">
      www.purplcow.com
    </text>
    <text x="1153" y="776" fill="#64148f" textAnchor="end">
      PurplCow specialise in Design recruitment. Visit us at www.purplcow.com
    </text>
    <text x="1153" y="790" fill="#64148f" textAnchor="end">
      and add your cv to our database today
    </text>
    <rect x="1157" y="732.5" width="171" height="63" fill="#fff" />
    <g className="font-['Open_Sans',sans-serif]" fontWeight="700">
      <text x="1162" y="773" fontSize="33" fill="#2db04d">
        purpl<tspan fill="#a34fa5">cow</tspan>
      </text>
      <text x="1319" y="788" fill="#1c1c1c" textAnchor="end">
        recruitment
      </text>
    </g>
    <path
      d="M1183 738l2 -1h14l4 -2 2 1 3 -1 0 2 2 3 -1 2h-4l-2 3 -1 3 -1 5h-2l-1 -5 -9 0 0 5h-2l-1 -5 -1 5h-2l0 -8 -1 -5z"
      fill="#8a0fc4"
    />
  </g>
);

const ModelSpace = () => (
  <svg
    viewBox="5 147 1524 650"
    className="block h-[650px] w-full font-['Liberation_Sans',sans-serif]"
    role="img"
    aria-label="Public WC plan"
  >
    <FloorPlan />
    <TitleBlock />
    <g stroke="#b9bbbd" fill="none">
      <path d="M21.5 741V782H61.5M17.5 777.5h8v8h-8z" />
      <path d="M22.5 728l5 6 5 -6M27.5 734v5M65 770l10 11M75 770l-10 11" />
    </g>
  </svg>
);

const ViewCube = () => (
  <div className="absolute right-[14px] top-[30px] flex w-[106px] flex-col items-center">
    <svg width="106" height="110" viewBox="0 0 106 110" className="font-['Liberation_Sans',sans-serif]">
      <circle cx="53" cy="54.5" r="43.5" fill="none" stroke="#42484f" strokeWidth="10" />
      <rect x="32.5" y="34.5" width="41" height="41" fill="#b2b4b5" stroke="#8d9093" />
      <rect x="40" y="42" width="26" height="26" fill="#a5a8aa" />
      <g fill="#a3a5a8" fontSize="16" fontWeight="700" textAnchor="middle">
        <text x="53" y="16">N</text>
        <text x="53" y="107">S</text>
        <text x="8" y="61">W</text>
        <text x="98" y="61">E</text>
      </g>
      <text x="53" y="59" fill="#474d54" fontSize="10" fontWeight="700" textAnchor="middle" className="font-['Roboto',sans-serif]">
        TOP
      </text>
    </svg>
    <button className="mt-[15px] h-[14px] w-[39px] rounded-sm border border-[#75797d] bg-[#94979b] pl-[3px] text-left leading-[11px] text-[#565b60]">
      WCS
    </button>
  </div>
);

const navTools = [
  {
    name: "Full Navigation Wheel",
    caret: true,
    icon: (
      <>
        <path d="M18 10a8 8 0 1 1-8-8h8z" />
        <circle cx="10" cy="10" r="4.5" />
      </>
    ),
  },
  {
    name: "Pan",
    icon: <path d="M6 18L2 11l2-1 3 3-2-9h2l1 6V2h2v8l2-7h2l-1 8 3-4 2 1-4 9-2 2H8z" />,
  },
  {
    name: "Zoom Extents",
    caret: true,
    icon: (
      <path d="M2 2l12 12M14 2L2 14M2 5V2h3M11 2h3v3M2 11v3h3M14 10a3 3 0 1 1-1 6 3 3 0 0 1 1-6zM16 15l3 3" />
    ),
  },
  {
    name: "Orbit",
    caret: true,
    icon: <path d="M8 18V6H6l4-5 4 5h-2v12zM7 8c-8 2-6 6 1 6M13 8c8 2 6 6-1 6M5 11l-3 3 4 2" />,
  },
  {
    name: "ShowMotion",
    icon: <path d="M1.5 1.5h5v4h-5zM7.5 1.5h5v4h-5zM13.5 1.5h5v4h-5zM1.5 8.5h13v10h-13zM5 11l5 3-5 3z" />,
  },
];

const NavBar = () => (
  <div className="absolute right-[3px] top-[189px] flex h-[170px] w-[26px] flex-col items-center rounded-sm border border-[#6b6f74] bg-[#5d6166]">
    <button aria-label="Close navigation bar" className="self-end">
      <svg width="8" height="10" viewBox="0 0 8 10" fill="none" stroke="#41464b">
        <path d="M4 1a3 3 0 1 1 0 6 3 3 0 0 1 0-6zM3 3l2 2M5 3L3 5" />
      </svg>
    </button>
    <div className="flex flex-1 flex-col pt-[3px]">
      {navTools.map((t) => (
        <button key={t.name} aria-label={t.name} className="flex flex-col items-center">
          <svg width="20" height="20" viewBox="0 0 20 20" fill="none" stroke="#41464b">
            {t.icon}
          </svg>
          {t.caret ? (
            <svg width="6" height="12" viewBox="0 0 6 12">
              <path d="M1 4h4L3 7z" fill="#3a3f44" />
            </svg>
          ) : (
            <span className="h-[3px]" />
          )}
        </button>
      ))}
    </div>
    <button aria-label="Navigation bar options" className="self-end">
      <svg width="8" height="10" viewBox="0 0 8 10" fill="none" stroke="#41464b">
        <path d="M4 2a3 3 0 1 1 0 6 3 3 0 0 1 0-6zM2 5h4" />
      </svg>
    </button>
  </div>
);

const CommandLine = () => (
  <div className="absolute bottom-0 left-[304px] right-[304px] font-['DejaVu_Sans_Mono',monospace] text-[#c3c5c7]">
    <div className="flex flex-col items-start gap-[4px] pb-[2px] pl-[49px] leading-[12px]">
      <p className="max-w-full rounded-xs bg-[#62656699] px-[2px] whitespace-pre">
        {"Autodesk DWG.  This file is a TrustedDWG last saved by an Autodesk application or Autodesk licensed application."}
      </p>
      <p className="rounded-xs bg-[#6c6f70cc] px-[2px] text-[#e4e4e4]">Command:</p>
      <p className="rounded-xs bg-[#6c6f70cc] px-[2px] text-[#e4e4e4]">Command:</p>
    </div>
    <div className="flex h-[20px] border-y border-[#77797c]">
      <div className="flex w-[44px] items-center gap-[6px] bg-[#555759] pl-[2px]">
        <Icon w={5} h={14}>
          <path d="M1 0v14M4 0v14" stroke="#999" strokeDasharray="1 1" />
        </Icon>
        <button aria-label="Close command line">
          <Icon w={8} h={8}>
            <path d="M1 1l6 6M7 1L1 7" strokeWidth="1.5" />
          </Icon>
        </button>
        <button aria-label="Customize command line">
          <Icon w={12} h={12}>
            <path d="M1 11l6-6M7 1v4h4" strokeWidth="2" />
          </Icon>
        </button>
      </div>
      <div className="flex min-w-0 flex-1 items-center gap-[3px] bg-white/70 px-[4px]">
        <Icon w={13} h={11}>
          <rect x="0.5" y="0.5" width="12" height="10" fill="#c9c9c9" stroke="#6d6d6d" />
          <path d="M0 2h13M2 4l3 2-3 2M6 8.5h4" stroke="#555" />
        </Icon>
        <Icon w={6} h={4}>
          <path d="M1 0h4L3 3z" fill="#555" stroke="none" />
        </Icon>
        <input
          aria-label="Command"
          placeholder="Type a command"
          className="min-w-0 flex-1 bg-transparent italic placeholder:text-[#77797c]"
        />
        <Icon w={7} h={5}>
          <path d="M0 4h6L3 0z" fill="#555" stroke="none" />
        </Icon>
      </div>
    </div>
  </div>
);

const Canvas = () => (
  <main className="relative flex-1 overflow-hidden bg-[#222830]">
    <ModelSpace />
    <div className="absolute left-[3px] right-[9px] top-[4px] flex items-center justify-between text-[#dedede]">
      <button>[−][Top][2D Wireframe]</button>
      <div className="flex gap-[8px]">
        <button aria-label="Minimize drawing">
          <Icon w={8} h={8}>
            <path d="M0 6.5h8" strokeWidth="2" stroke="#fff" />
          </Icon>
        </button>
        <button aria-label="Restore drawing">
          <Icon w={8} h={8}>
            <path d="M2.5 2.5v-2h5v5h-2M0.5 2.5h5v5h-5zM0 3.5h6" stroke="#fff" />
          </Icon>
        </button>
        <button aria-label="Close drawing">
          <Icon w={8} h={8}>
            <path d="M1 1l6 6M7 1L1 7" strokeWidth="2" stroke="#fff" />
          </Icon>
        </button>
      </div>
    </div>
    <ViewCube />
    <NavBar />
    <CommandLine />
  </main>
);

/* ---------- status bar ---------- */

const Cell = ({ children, label, width, on }: { children: ReactNode; label: string; width: string; on?: boolean }) => (
  <button
    aria-label={label}
    className={clsx(width, "flex h-[19px] items-center justify-center", on && "bg-[#5d8bc0]")}
  >
    {children}
  </button>
);

const Group = ({ children }: { children: ReactNode }) => (
  <div className="flex border border-[#2f2f2f] bg-[#545454]">{children}</div>
);

const person = <path d="M8 2l1 5 5 7-6-4-6 4 5-7z" fill="#dedede" stroke="#dedede" />;

const layouts = [
  { name: "Model", look: "w-[43px] bg-linear-to-b from-[#555] to-[#8b8b8b] font-bold text-white" },
  { name: "Layout1", look: "w-[54px] bg-[#4d4d4d]" },
  { name: "Layout2", look: "w-[51px] bg-[#4d4d4d]" },
];

const StatusBar = () => (
  <footer className="flex h-[25px] items-start bg-[#383838] pl-[11px]">
    <div className="flex pt-[1px] text-[#a9a9a9]">
      {layouts.map((l) => (
        <button
          key={l.name}
          className={clsx(
            l.look,
            "h-[15px] rounded-b-md [clip-path:polygon(0_0,100%_0,calc(100%-4px)_100%,5px_100%)]"
          )}
        >
          {l.name}
        </button>
      ))}
      <button aria-label="New layout" className="flex h-[13px] w-[18px] items-center justify-center rounded-b-md bg-[#4d4d4d] ml-[4px]">
        <Icon w={8} h={8}>
          <path d="M4 1v6M1 4h6" />
        </Icon>
      </button>
    </div>
    <div className="ml-auto flex pt-[2px] text-white">
      <Group>
        <Cell label="Model space" width="w-[38px]">
          MODEL
        </Cell>
      </Group>
      <Group>
        <Cell label="Grid" width="w-[20px]">
          <Icon>
            <path d="M5.5 2v12M8.5 2v12M11.5 2v12M2 5.5h12M2 8.5h12M2 11.5h12" />
          </Icon>
        </Cell>
        <Cell label="Snap" width="w-[20px]">
          <Icon>
            <path d="M3 4h12M3 9h12M3 14h12" strokeWidth="2" strokeDasharray="2 3" />
          </Icon>
        </Cell>
        <Cell label="Snap settings" width="w-[12px]">
          <Caret big />
        </Cell>
      </Group>
      <Group>
        <Cell label="Ortho" width="w-[19px]" on>
          <Icon>
            <path d="M3.5 2v11.5H15M4 9.5h4.5v4" />
          </Icon>
        </Cell>
        <Cell label="Polar tracking" width="w-[20px]">
          <Icon>
            <path d="M11 4a5 5 0 1 0 2 6M7 9l7-6M7 8.5h8" />
          </Icon>
        </Cell>
        <Cell label="Polar settings" width="w-[12px]">
          <Caret big />
        </Cell>
        <Cell label="Isodraft" width="w-[18px]">
          <Icon>
            <path d="M3 3l11 11" stroke="#b9856f" />
            <path d="M8.5 2v6" stroke="#58b35a" />
            <path d="M8.5 8v6" />
          </Icon>
        </Cell>
        <Cell label="Isodraft settings" width="w-[12px]">
          <Caret big />
        </Cell>
      </Group>
      <Group>
        <Cell label="Object snap tracking" width="w-[18px]" on>
          <Icon>
            <path d="M14 3L3 13.5h12" strokeWidth="1.5" />
          </Icon>
        </Cell>
        <Cell label="Object snap" width="w-[19px]" on>
          <Icon>
            <path d="M3.5 6v8h10V4.5H6" />
            <circle cx="3.5" cy="3.5" r="1.5" />
          </Icon>
        </Cell>
        <Cell label="Object snap settings" width="w-[14px]">
          <Caret big />
        </Cell>
      </Group>
      <Group>
        <Cell label="Annotation visibility" width="w-[18px]" on>
          <Icon>
            {person}
            <circle cx="12" cy="4" r="2" />
          </Icon>
        </Cell>
        <Cell label="Auto scale" width="w-[20px]">
          <Icon>
            {person}
            <path d="M13 1l-3 4h3l-2 3" />
          </Icon>
        </Cell>
        <Cell label="Annotation scale" width="w-[20px]">
          <Icon>{person}</Icon>
        </Cell>
        <Cell label="Scale list" width="w-[26px]">
          <span className="mr-[2px]">1:1</span>
          <Caret big />
        </Cell>
      </Group>
      <Group>
        <Cell label="Workspace" width="w-[19px]">
          <Icon>
            <circle cx="8" cy="8" r="3.5" strokeWidth="3" />
            <path d="M8 1v3M8 12v3M1 8h3M12 8h3M3 3l2 2M11 11l2 2M13 3l-2 2M3 13l2-2" strokeWidth="2" />
          </Icon>
        </Cell>
        <Cell label="Workspace list" width="w-[12px]">
          <Caret big />
        </Cell>
      </Group>
      <Group>
        <Cell label="Annotation monitor" width="w-[19px]">
          <Icon>
            <path d="M8 2v12M2 8h12" strokeWidth="1.5" />
          </Icon>
        </Cell>
      </Group>
      <Group>
        <Cell label="Isolate objects" width="w-[20px]">
          <Icon>
            <path d="M2.5 2.5h4v4h-4zM7 10l3 4H4z" />
            <circle cx="12" cy="7" r="2" />
          </Icon>
        </Cell>
      </Group>
      <Group>
        <Cell label="Graphics performance" width="w-[19px]">
          <Icon>
            <path d="M2 2h8v10H2z" fill="#7db4df" stroke="none" />
            <path d="M4 5h7v6H4z" fill="#dbe9f4" stroke="none" />
            <path d="M7 11l3 3 5-6" stroke="#35b24a" strokeWidth="2" />
          </Icon>
        </Cell>
        <Cell label="Hardware" width="w-[20px]">
          <Icon>
            <path d="M2 3h11v8H2z" fill="#dedede" stroke="none" />
            <path d="M3 5l3 3 3-2 3 4" stroke="#555" />
            <path d="M11 7l4 7H8z" fill="#d9533b" stroke="none" />
          </Icon>
        </Cell>
      </Group>
      <Group>
        <Cell label="Clean screen" width="w-[20px]">
          <Icon>
            <path d="M2.5 3.5h12v9h-12zM9 5.5h3.5V8M5 8v2.5h3" />
          </Icon>
        </Cell>
        <Cell label="Customization" width="w-[20px]">
          <Icon>
            <path d="M2 4h12M2 8h12M2 12h12" strokeWidth="1.5" stroke="#fff" />
          </Icon>
        </Cell>
      </Group>
    </div>
  </footer>
);

export default function App() {
  return (
    <div className="flex min-h-screen flex-col overflow-x-hidden bg-[#d9dadb] pl-[5px] pr-[7px] pt-[2px] font-['Open_Sans',sans-serif] text-[9px] leading-[14px]">
      <div className="relative flex flex-1 flex-col overflow-hidden rounded-lg">
        <TitleBar />
        <MenuBar />
        <Ribbon />
        <DocTabs />
        <Canvas />
        <StatusBar />
        <AppButton />
      </div>
      <div className="flex h-[11px] justify-end bg-linear-to-b from-[#b3b5b7] to-[#dedede] pr-[14px]">
        <span className="h-[6px] w-[20px] border border-t-0 border-[#4c84bd]" />
      </div>
    </div>
  );
}
